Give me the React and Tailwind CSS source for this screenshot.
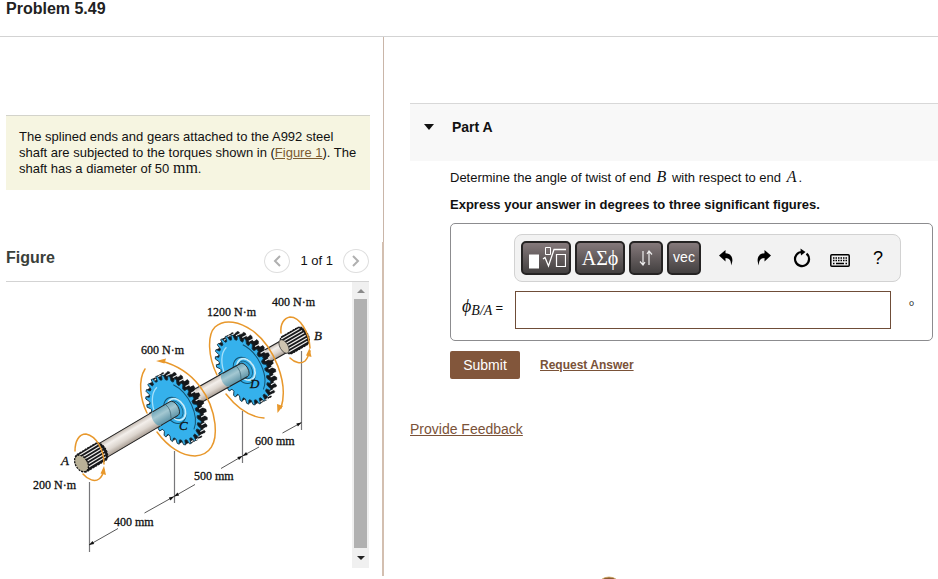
import React, { useState } from "react";

// point on a tilted gear face, r is relative to the rim
const gearPoint = (cx, cy, t, r) => {
    const a = 38 * r * Math.cos(t);
    const b = 23.5 * r * Math.sin(t);
    const x = cx + a * 0.5 + b * 0.866;
    const y = cy + a * 0.866 - b * 0.5;
    return `${x.toFixed(1)} ${y.toFixed(1)}`;
};

const teeth = 26;
const step = (Math.PI * 2) / teeth;

const gearPath = (cx, cy) => {
    let d = "";
    for (let i = 0; i < teeth; i++) {
        const t = i * step;
        d += `${i === 0 ? "M" : "L"}${gearPoint(cx, cy, t, 0.86)}`;
        d += `L${gearPoint(cx, cy, t + step * 0.3, 0.87)}`;
        d += `L${gearPoint(cx, cy, t + step * 0.45, 0.99)}`;
        d += `L${gearPoint(cx, cy, t + step * 0.75, 1)}`;
        d += `L${gearPoint(cx, cy, t + step * 0.9, 0.88)}`;
    }
    return d + "Z";
};

// light gaps between the teeth on the side that shows its thickness
const gapPath = (cx, cy) => {
    let d = "";
    for (let i = 0; i < teeth; i++) {
        const t = (i + 0.15) * step;
        if (Math.sin(t) > -0.3) {
            d += `M${gearPoint(cx + 1, cy - 0.5, t, 0.97)}l4.800 -2.600`;
        }
    }
    return d;
};

function Gear({ cx, cy }) {
    const d = gearPath(cx, cy);
    return (
        <g>
            {[7, 6, 5, 4, 3, 2, 1].map((k) => (
                <path
                    key={k}
                    d={d}
                    transform={`translate(${k * 0.87} ${k * -0.5})`}
                    fill="#15181b"
                    stroke={k === 7 ? "#111" : "none"}
                    strokeWidth="0.6"
                />
            ))}
            <path d={gapPath(cx, cy)} stroke="#e9edf0" strokeWidth="1.1" />
            <path d={d} fill="#35b1ec" stroke="#12303f" strokeWidth="0.9" />
            <g transform={`translate(${cx} ${cy}) rotate(60)`} fill="none">
                <path d="M-4 18A29 18 0 0 1 -28 3" stroke="#a5e0fa" strokeWidth="1.3" />
                <path d="M-22 -12.5A30 18.5 0 0 1 27 -8" stroke="#14506e" strokeWidth="1" />
                <ellipse rx="14" ry="10" cx="1" cy="-1" fill="#35b1ec" stroke="#14506e" strokeWidth="0.9" />
                <ellipse rx="11.5" ry="8" cx="1" cy="-3" stroke="#c5edfc" strokeWidth="1.8" />
                <ellipse rx="9.500" ry="6.500" cx="1" cy="-2" fill="#2ea6df" stroke="#14506e" strokeWidth="0.7" />
            </g>
        </g>
    );
}

// piece of the shaft between two points of its centre line
function Rod({ x1, y1, x2, y2, r, fill = "url(#steel)", cap }) {
    const len = Math.hypot(x2 - x1, y2 - y1);
    const angle = (Math.atan2(y2 - y1, x2 - x1) * 180) / Math.PI;
    return (
        <g transform={`translate(${x1} ${y1}) rotate(${angle})`}>
            <path
                d={`M0 ${-r}H${len}A${r * 0.55} ${r} 0 0 1 ${len} ${r}H0A${r * 0.55} ${r} 0 0 1 0 ${-r}Z`}
                fill={fill}
            />
            <path d={`M0 ${-r}H${len}M0 ${r}H${len}`} stroke="#222" strokeWidth="1.1" />
            {cap && (
                <path
                    d={`M${len} ${-r}A${r * 0.55} ${r} 0 0 1 ${len} ${r}`}
                    fill="none"
                    stroke="#222"
                    strokeWidth="0.8"
                />
            )}
        </g>
    );
}

function Spline({ x, y, angle, len }) {
    return (
        <g transform={`translate(${x} ${y}) rotate(${angle})`}>
            <path
                d={`M0 -10H${len}A5.5 10 0 0 1 ${len} 10H0A5.5 10 0 0 1 0 -10Z`}
                fill="#17181a"
                stroke="#111"
                strokeDasharray="2 1"
            />
            {[-8, -5, -2, 1, 4, 7].map((v) => {
                const bulge = 5 * Math.sqrt(1 - (v * v) / 100);
                return (
                    <path
                        key={v}
                        d={`M${1 - bulge} ${v}H${len + bulge - 2}`}
                        stroke="#f1efec"
                        strokeWidth="1.2"
                    />
                );
            })}
        </g>
    );
}

const dimensions = [
    [89, 545, 118, 528.5],
    [174, 496.5, 144.5, 513],
    [174, 496.5, 195, 484.5],
    [242.5, 456, 221, 468.5],
    [242.5, 456, 259, 447],
    [301.5, 422.5, 282.5, 433],
];

const labels = [
    [207, 316, "1200 N·m"],
    [272, 306, "400 N·m"],
    [141, 354, "600 N·m"],
    [33, 489, "200 N·m"],
    [114, 526, "400 mm"],
    [194, 480, "500 mm"],
    [255, 445, "600 mm"],
];

const points = [
    [61, 465, "A"],
    [314, 340, "B"],
    [179, 430, "C"],
    [250, 388, "D"],
];

function ShaftFigure() {
    return (
        <svg viewBox="6 282 346 286" className="block w-full min-w-0 flex-1" role="img">
            <defs>
                <linearGradient id="steel" x1="0" y1="0" x2="0" y2="1">
                    <stop offset="0" stopColor="#c4bab1" />
                    <stop offset="0.3" stopColor="#f3efeb" />
                    <stop offset="0.65" stopColor="#dcd5ce" />
                    <stop offset="1" stopColor="#a89d93" />
                </linearGradient>
                <linearGradient id="glass" x1="0" y1="0" x2="0" y2="1">
                    <stop offset="0" stopColor="#6fa6b8" />
                    <stop offset="0.4" stopColor="#a4c8d2" />
                    <stop offset="1" stopColor="#5d93a6" />
                </linearGradient>
            </defs>

            <g stroke="#77777a" strokeWidth="1.2">
                <path d="M89.5 482V552M174.5 451V503M242.5 411V463M301.5 351V430" />
            </g>
            {dimensions.map(([x1, y1, x2, y2], i) => {
                const angle = (Math.atan2(y2 - y1, x2 - x1) * 180) / Math.PI;
                return (
                    <g key={i}>
                        <path d={`M${x1} ${y1}L${x2} ${y2}`} stroke="#444" strokeWidth="0.9" />
                        <path
                            d="M0 0L5 -1.7V1.7Z"
                            fill="#111"
                            transform={`translate(${x1} ${y1}) rotate(${angle})`}
                        />
                    </g>
                );
            })}

            {/* end B */}
            <Spline x={287} y={345} angle={-30} len={18} />
            <Rod x1={262} y1={359} x2={284} y2={346.5} r={6.5} />
            <ellipse
                cx="284"
                cy="346.5"
                rx="4"
                ry="7.5"
                transform="rotate(-30 284 346.5)"
                fill="#cdc3b0"
                stroke="#333"
                strokeWidth="0.7"
            />
            <Gear cx={243} cy={370} />
            <Rod x1={186} y1={402.5} x2={226} y2={380} r={7.5} />
            <Rod x1={226} y1={380} x2={244} y2={370} r={7.5} fill="url(#glass)" cap />

            <Gear cx={173.5} cy={410} />
            <Rod x1={97} y1={454} x2={158} y2={418} r={8} />
            <Rod x1={157} y1={418.5} x2={174} y2={408.5} r={8} fill="url(#glass)" cap />
            <path d="M236 366Q241 370 241 379M166 405Q171 409 171 418" stroke="#3f6775" strokeWidth="0.8" fill="none" />

            {/* end A */}
            <Spline x={82} y={463} angle={-31} len={22} />
            <ellipse
                cx="81.5"
                cy="463.5"
                rx="6"
                ry="9"
                transform="rotate(-31 81.5 463.5)"
                fill="#b9b197"
                stroke="#111"
                strokeWidth="1.3"
                strokeDasharray="2 1"
            />

            <g fill="none" stroke="#e8982c" strokeWidth="1.5" strokeLinecap="round">
                <path d="M145 369C138 380 140 399 147 413" />
                <path d="M157 432C168 447 182 456 195 456C210 455 217 444 215 424C212 399 196 370 161 361" />
                <path d="M217 375C208 357 207 335 215 327C225 318 240 322 253 331C274 347 289 383 281 408" />
                <path d="M226 394C237 408 249 417 264 418" />
                <path d="M75 451C75 441 79 434 86 434C96 436 104 449 104 464" />
                <path d="M83 474C88 480 95 482 99 479C102 477 103 474 104 470" />
                <path d="M281 333C280 324 284 318 290 317C300 317 309 332 310 348" />
                <path d="M290 358C295 363 301 364 305 361C308 358 309 354 310 351" />
            </g>
            <g fill="#e8982c">
                <path d="M156 361L166 358.5L164.500 363.500Z" />
                <path d="M277.500 413L277 404L283 406Z" />
                <path d="M104 466L106 475L100.500 473.500Z" />
                <path d="M309.500 348L311.500 357L306 355.500Z" />
            </g>

            <g fontFamily="Liberation Serif, serif" fill="#111" stroke="#111" strokeWidth="0.3">
                {labels.map(([x, y, text]) => (
                    <text key={text} x={x} y={y} fontSize="12">
                        {text}
                    </text>
                ))}
                {points.map(([x, y, text]) => (
                    <text key={text} x={x} y={y} fontSize="13" fontStyle="italic">
                        {text}
                    </text>
                ))}
            </g>
        </svg>
    );
}

function Variable({ children }) {
    return (
        <span className="px-[2px] font-['Liberation_Serif',serif] text-base leading-none italic">
            {children}
        </span>
    );
}

function FigurePanel() {
    return (
        <section className="border-r-2 border-[#d3bfb0] pt-[7px] pr-[13px] pb-2 pl-[6px]">
            <div className="flex items-start border-b border-[#d3d3d3] pb-2">
                <h2 className="flex-1 text-base leading-[18px] font-bold text-[#3a403a]">Figure</h2>
                <button
                    aria-label="Previous figure"
                    className="flex h-6 w-[26px] items-center justify-center rounded-[50%] border border-[#dedede]"
                >
                    <svg width="8" height="12" viewBox="0 0 8 12" fill="none" stroke="#b0b0b0" strokeWidth="2">
                        <path d="M7 1L2 6L7 11" />
                    </svg>
                </button>
                <span className="px-[10px] text-[13px] leading-6">1 of 1</span>
                <button
                    aria-label="Next figure"
                    className="flex h-6 w-[26px] items-center justify-center rounded-[50%] border border-[#dedede]"
                >
                    <svg width="8" height="12" viewBox="0 0 8 12" fill="none" stroke="#b0b0b0" strokeWidth="2">
                        <path d="M1 1L6 6L1 11" />
                    </svg>
                </button>
            </div>
            <div className="flex">
                <ShaftFigure />
                <div className="flex w-[17px] shrink-0 flex-col bg-[#f0f0f0]">
                    <button aria-label="Scroll up" className="flex h-[17px] items-center justify-center">
                        <svg width="8" height="4" viewBox="0 0 8 4" fill="#8a8a8a">
                            <path d="M4 0L8 4H0Z" />
                        </svg>
                    </button>
                    <div className="mx-[2px] flex-1 bg-[#b1b1b1]" />
                    <button aria-label="Scroll down" className="flex h-5 items-center justify-center">
                        <svg width="8" height="4" viewBox="0 0 8 4" fill="#222">
                            <path d="M0 0H8L4 4Z" />
                        </svg>
                    </button>
                </div>
            </div>
        </section>
    );
}

const darkKey =
    "flex h-[34px] items-center justify-center rounded-[5px] border-2 border-[#252323] bg-linear-to-b from-[#85797b] to-[#434040] text-white";
const iconKey = "flex h-[34px] w-[38px] items-center justify-center text-black";

function Toolbar() {
    return (
        <div className="mr-[31px] ml-[52px] flex rounded-lg border border-[#d2d2d2] bg-[#f2f2f2] p-[6px]">
            <div className="flex gap-1">
                <button aria-label="Templates" className={`${darkKey} w-[50px]`}>
                    <svg width="40" height="24" viewBox="0 0 40 24" fill="none" stroke="#fff">
                        <path d="M3 8.500H13V22.500H3Z" fill="#fff" stroke="none" />
                        <path d="M19.500 1.500H24.500V8.500H19.500Z" strokeWidth="1" />
                        <path d="M17 13L19 11.500L22.500 20L28 3.500H40" strokeWidth="1.300" />
                        <path d="M30.500 8.500H39.500V20.500H30.500Z" strokeWidth="1.200" />
                    </svg>
                </button>
                <button
                    aria-label="Symbols"
                    className={`${darkKey} w-[50px] font-['Liberation_Serif',serif] text-xl leading-none`}
                >
                    ΑΣϕ
                </button>
                <button aria-label="Subscript and superscript" className={`${darkKey} w-[34px]`}>
                    <svg width="14" height="16" viewBox="0 0 14 16" fill="none" stroke="#eee" strokeWidth="1.2">
                        <path d="M4 1V15M1 11.500L4 15L6 12M10 15V1M8 4L10 1L13 4.500" />
                    </svg>
                </button>
                <button className={`${darkKey} w-[34px] pb-[2px] text-sm leading-none`}>vec</button>
            </div>
            <div className="ml-[6px] flex">
                <button aria-label="Undo" className={iconKey}>
                    <svg width="14" height="16" viewBox="0 0 14 16" fill="#000">
                        <path d="M0 5.500L6.500 0V3.300C12 3.500 15.500 8 12 15.500C12.300 10.500 10.500 8.300 6.500 8V11.500Z" />
                    </svg>
                </button>
                <button aria-label="Redo" className={iconKey}>
                    <svg width="14" height="16" viewBox="0 0 14 16" fill="#000">
                        <path d="M14 5.500L7.500 0V3.300C2 3.500 -1.500 8 2 15.500C1.700 10.500 3.500 8.300 7.500 8V11.500Z" />
                    </svg>
                </button>
                <button aria-label="Reset" className={iconKey}>
                    <svg width="18" height="20" viewBox="0 0 18 20" fill="none" stroke="#000" strokeWidth="2.2">
                        <path d="M9 4A7 7 0 1 0 13.500 5.600" />
                        <path d="M7.500 0.500L12.500 4L8 7.500Z" fill="#000" stroke="none" />
                    </svg>
                </button>
                <button aria-label="Keyboard" className={`${iconKey} pt-1`}>
                    <svg width="20" height="13" viewBox="0 0 20 13" fill="none" stroke="#000">
                        <rect x="0.800" y="0.800" width="18.400" height="11.400" rx="1" strokeWidth="1.500" />
                        <path d="M3 4H17M3 6.500H17" strokeWidth="1.500" strokeDasharray="1.500 1" />
                        <path d="M3 9.500H4.500M6 9.500H14M15.500 9.500H17" strokeWidth="1.500" />
                    </svg>
                </button>
                <button className={`${iconKey} text-lg leading-none`}>?</button>
            </div>
        </div>
    );
}

function PartA() {
    const [open, setOpen] = useState(true);
    const [answer, setAnswer] = useState("");

    return (
        <section>
            <h2 className="border-t border-[#d8d8d8] bg-[#f8f8f8] pt-[15px] pb-[26px] pl-[14px]">
                <button
                    className="flex items-center gap-[18px] text-sm leading-4 font-bold"
                    onClick={() => setOpen(!open)}
                >
                    <svg width="10" height="6" viewBox="0 0 10 6" fill="#111">
                        <path d="M0 0H10L5 6Z" />
                    </svg>
                    Part A
                </button>
            </h2>
            {open && (
                <div className="pt-[7px] pr-[5px] pl-10 text-[13px] leading-5">
                    <p>
                        Determine the angle of twist of end <Variable>B</Variable> with respect to end{" "}
                        <Variable>A</Variable>.
                    </p>
                    <p className="mt-[7px] font-bold">
                        Express your answer in degrees to three significant figures.
                    </p>
                    <div className="mt-2 rounded-[5px] border border-[#8c8c8f] pt-[10px] pb-[11px] pl-[11px]">
                        <Toolbar />
                        <div className="mt-[9px] flex">
                            <label
                                htmlFor="answer"
                                className="w-[53px] shrink-0 pt-[6px] font-['Liberation_Serif',serif] whitespace-nowrap"
                            >
                                <span className="text-lg leading-none italic">ϕ</span>
                                <sub className="bottom-[-3px] text-sm leading-none italic">B/A</sub>{" "}
                                <span className="font-['Liberation_Sans',sans-serif]">=</span>
                            </label>
                            <input
                                id="answer"
                                className="h-[38px] min-w-0 flex-1 border border-[#6f4d38] bg-white px-2 outline-none"
                                value={answer}
                                onChange={(e) => setAnswer(e.target.value)}
                            />
                            <span className="flex w-[41px] shrink-0 justify-center pt-[6px] font-['Liberation_Serif',serif] text-sm">
                                °
                            </span>
                        </div>
                    </div>
                    <div className="mt-[10px] flex items-center gap-5">
                        <button className="h-7 w-[70px] rounded-[2px] bg-[#82563b] text-sm text-white">
                            Submit
                        </button>
                        <a href="#request" className="text-xs font-bold text-[#7a5238] underline">
                            Request Answer
                        </a>
                    </div>
                </div>
            )}
        </section>
    );
}

function App() {
    return (
        <div className="flex min-h-screen flex-col bg-white font-['Liberation_Sans',Arial,sans-serif] text-[#111]">
            <header className="border-b border-[#d3d3d3] pt-px pb-[19px] pl-[6px]">
                <h1 className="text-base leading-4 font-bold text-[#222]">Problem 5.49</h1>
            </header>
            <main className="flex flex-1">
                <div className="w-96 shrink-0 self-start">
                    <section className="border-r border-[#c9b5a8] pt-[78px] pr-[13px] pb-[52px] pl-[6px]">
                        <p className="border-t border-[#d3d3cb] bg-[#f6f5e1] px-[13px] py-[13px] text-[13px] leading-4">
                            The splined ends and gears attached to the A992 steel shaft are subjected to the
                            torques shown in (
                            <a href="#figure" className="text-[#7a5a30] underline">
                                Figure 1
                            </a>
                            ). The shaft has a diameter of 50{" "}
                            <span className="font-['Liberation_Serif',serif] text-base leading-3">mm</span>.
                        </p>
                    </section>
                    <FigurePanel />
                </div>
                <div className="flex min-w-0 flex-1 flex-col pt-[66px] pl-[26px]">
                    <PartA />
                    <a
                        href="#feedback"
                        className="mt-10 self-start text-sm leading-5 text-[#7a5238] underline"
                    >
                        Provide Feedback
                    </a>
                    <svg width="18" height="3" viewBox="0 0 18 3" className="mt-auto ml-[190px]">
                        <ellipse cx="9" cy="10" rx="11" ry="9" fill="#8a5a34" stroke="#d0a860" strokeWidth="0.800" />
                    </svg>
                </div>
            </main>
        </div>
    );
}

export default App;
